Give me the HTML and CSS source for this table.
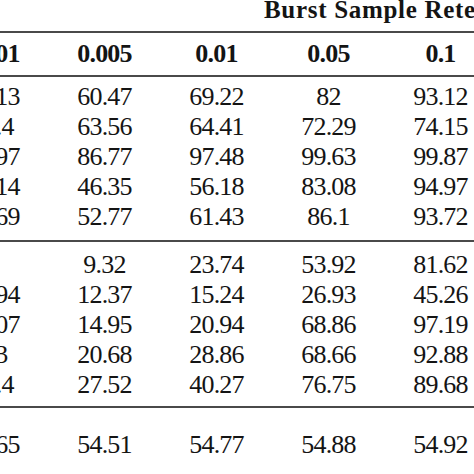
FILE: index.html
```html
<!DOCTYPE html>
<html lang="en">
<head>
<meta charset="utf-8">
<title>Burst Sample Retention Rate</title>
<link rel="stylesheet" href="styles.css">
</head>
<body>
<div class="table">
  <div class="caption-row"><span class="caption">Burst Sample Retention Rate (%)</span></div>
  <div class="row head">
    <span>0.001</span><span>0.005</span><span>0.01</span><span>0.05</span><span>0.1</span>
  </div>
  <div class="group g1">
    <div class="row"><span>51.13</span><span>60.47</span><span>69.22</span><span>82</span><span>93.12</span></div>
    <div class="row"><span>67.4</span><span>63.56</span><span>64.41</span><span>72.29</span><span>74.15</span></div>
    <div class="row"><span>79.97</span><span>86.77</span><span>97.48</span><span>99.63</span><span>99.87</span></div>
    <div class="row"><span>35.14</span><span>46.35</span><span>56.18</span><span>83.08</span><span>94.97</span></div>
    <div class="row"><span>43.69</span><span>52.77</span><span>61.43</span><span>86.1</span><span>93.72</span></div>
  </div>
  <div class="group g2">
    <div class="row"><span>5</span><span>9.32</span><span>23.74</span><span>53.92</span><span>81.62</span></div>
    <div class="row"><span>10.94</span><span>12.37</span><span>15.24</span><span>26.93</span><span>45.26</span></div>
    <div class="row"><span>12.07</span><span>14.95</span><span>20.94</span><span>68.86</span><span>97.19</span></div>
    <div class="row"><span>8.3</span><span>20.68</span><span>28.86</span><span>68.66</span><span>92.88</span></div>
    <div class="row"><span>22.4</span><span>27.52</span><span>40.27</span><span>76.75</span><span>89.68</span></div>
  </div>
  <div class="group g3">
    <div class="row"><span>54.65</span><span>54.51</span><span>54.77</span><span>54.88</span><span>54.92</span></div>
  </div>
</div>
</body>
</html>
```

FILE: styles.css
```css
html, body {
  margin: 0;
  padding: 0;
  background: #ffffff;
  overflow: hidden;
  width: 474px;
  height: 474px;
}

.table {
  width: 560px;
  margin-left: -63.5px;
  font-family: "Liberation Serif", "Times New Roman", serif;
  color: #141414;
}

.caption-row {
  height: 31px;
  border-bottom: 2px solid #4a4a4a;
  padding-left: 327.5px;
  white-space: nowrap;
  overflow: hidden;
}

.caption {
  font-weight: bold;
  font-size: 25px;
  line-height: 20px;
  letter-spacing: 0.7px;
}

.row {
  display: grid;
  grid-template-columns: repeat(5, 112px);
  height: 30px;
  font-size: 26px;
  line-height: 30px;
  letter-spacing: -0.8px;
  text-align: center;
  white-space: nowrap;
}

.row span {
  display: block;
}

.row.head {
  height: 42px;
  line-height: 42px;
  font-weight: bold;
  border-bottom: 2px solid #4a4a4a;
}

.group.g1 {
  padding-top: 5px;
  padding-bottom: 8px;
  border-bottom: 2px solid #4a4a4a;
}

.group.g2 {
  padding-top: 8px;
  padding-bottom: 6px;
  border-bottom: 2px solid #4a4a4a;
}

.group.g3 {
  padding-top: 22px;
}
```
